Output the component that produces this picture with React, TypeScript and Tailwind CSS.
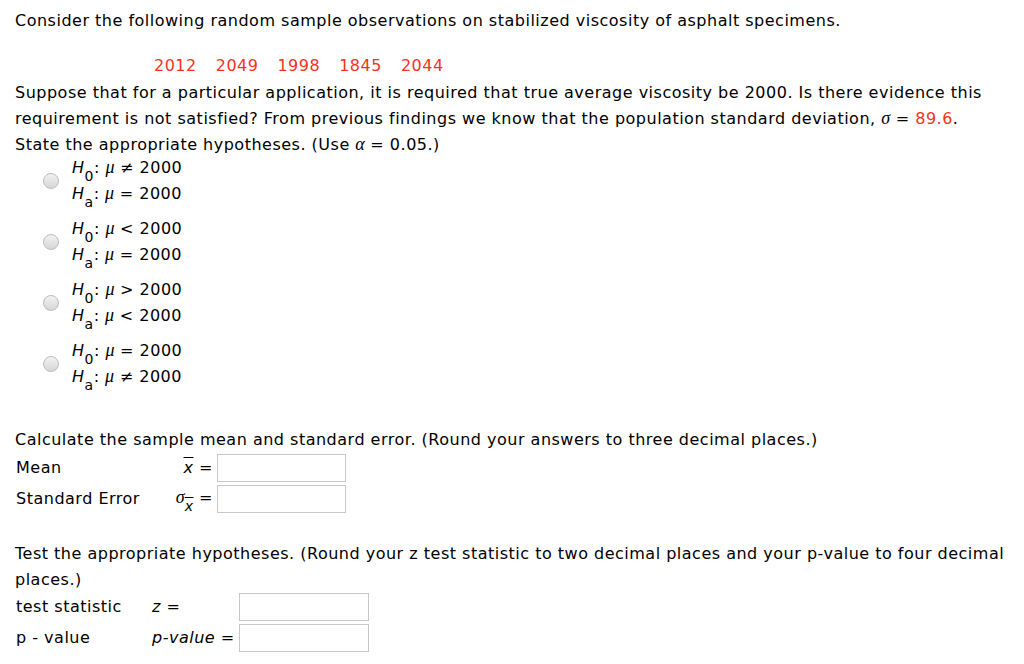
import React from "react";

const Mu = () => <span className="font-['Liberation_Serif'] italic text-[18px] leading-none tracking-normal">μ</span>;

const H = ({ sub }: { sub: string }) => (
  <span>
    <span className="italic">H</span>
    <sub className="text-[14px] align-[-4px] leading-none">{sub}</sub>
  </span>
);

const Radio = () => (
  <div className="w-[16px] h-[16px] rounded-full border border-[#bdbdbd] bg-gradient-to-b from-[#f2f2f2] to-[#d6d6d6] shrink-0" />
);

const Option = ({ h0, ha }: { h0: string; ha: string }) => (
  <div className="flex items-center">
    <div className="ml-[28px] mr-[13px]">
      <Radio />
    </div>
    <div>
      <div className="h-[26px]">
        <H sub="0" />: <Mu /> {h0}
      </div>
      <div className="h-[26px]">
        <H sub="a" />: <Mu /> {ha}
      </div>
    </div>
  </div>
);

const Box = () => <div className="h-[28px] border border-[#c8c8c8] bg-white" />;

export default function App() {
  return (
    <div className="w-[1024px] h-[664px] bg-white text-black font-['DejaVu_Sans','Verdana',sans-serif] text-[16px] leading-[26px] tracking-[0.5px] pl-[15px] pt-[8px]">
      <div>Consider the following random sample observations on stabilized viscosity of asphalt specimens.</div>
      <div className="mt-[19px] pl-[139px] flex gap-[19px] text-[#f5331c]">
        <span>2012</span>
        <span>2049</span>
        <span>1998</span>
        <span>1845</span>
        <span>2044</span>
      </div>
      <div className="mt-px">
        Suppose that for a particular application, it is required that true average viscosity be 2000. Is there evidence this
        <br />
        requirement is not satisfied? From previous findings we know that the population standard deviation,{" "}
        <span className="font-['Liberation_Serif'] italic text-[18px] leading-none tracking-normal">σ</span> ={" "}
        <span className="text-[#f5331c]">89.6</span>.
        <br />
        State the appropriate hypotheses. (Use{" "}
        <span className="font-['Liberation_Serif'] italic text-[18px] leading-none tracking-normal">α</span> = 0.05.)
      </div>
      <div className="-mt-[3px] flex flex-col gap-[9px]">
        <Option h0="≠ 2000" ha="= 2000" />
        <Option h0="< 2000" ha="= 2000" />
        <Option h0="> 2000" ha="< 2000" />
        <Option h0="= 2000" ha="≠ 2000" />
      </div>
      <div className="mt-[37px]">
        Calculate the sample mean and standard error. (Round your answers to three decimal places.)
      </div>
      <div className="grid grid-cols-[145px_57px_129px] auto-rows-[31px] items-center -mt-[1px]">
        <div className="pl-px">Mean</div>
        <div className="text-right pr-[4px]">
          <span className="italic overline">x</span> =
        </div>
        <Box />
        <div className="pl-px">Standard Error</div>
        <div className="text-right pr-[4px] leading-[20px]">
          <span className="font-['Liberation_Serif'] italic text-[18px] leading-none tracking-normal">σ</span>
          <sub className="italic text-[14px] overline align-[-5px] leading-none">x</sub> =
        </div>
        <Box />
      </div>
      <div className="mt-[27px]">
        Test the appropriate hypotheses. (Round your z test statistic to two decimal places and your p-value to four decimal
        <br />
        places.)
      </div>
      <div className="grid grid-cols-[137px_87px_130px] auto-rows-[31px] items-center -mt-[2px]">
        <div className="pl-px">test statistic</div>
        <div>
          <span className="italic">z</span> =
        </div>
        <Box />
        <div className="pl-px">p - value</div>
        <div>
          <span className="italic">p-value</span> =
        </div>
        <Box />
      </div>
    </div>
  );
}
